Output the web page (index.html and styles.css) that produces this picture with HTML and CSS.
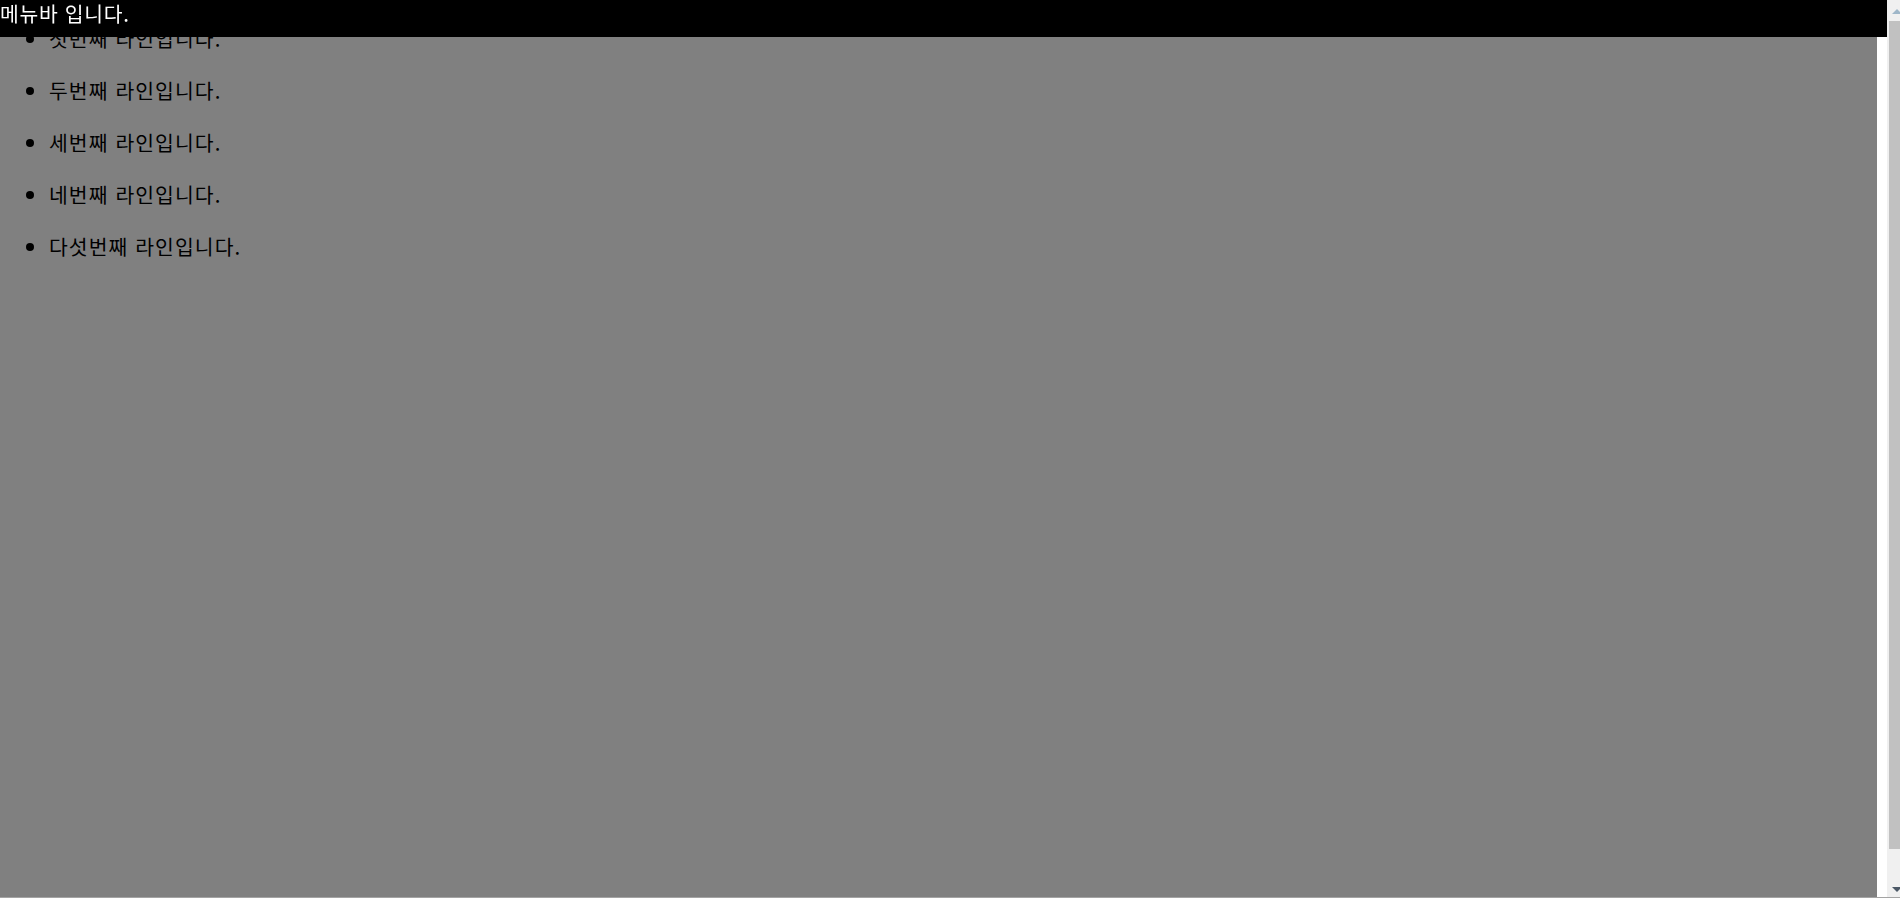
FILE: index.html
```html
<!DOCTYPE html>
<html lang="ko">
<head>
<meta charset="utf-8">
<title>메뉴바</title>
<link rel="stylesheet" href="styles.css">
</head>
<body>
<div class="frame">
  <div class="page">
    <div class="canvas">
      <ul class="lines">
        <li>첫번째 라인입니다.</li>
        <li>두번째 라인입니다.</li>
        <li>세번째 라인입니다.</li>
        <li>네번째 라인입니다.</li>
        <li>다섯번째 라인입니다.</li>
      </ul>
    </div>
    <div class="gutter"></div>
  </div>
  <div class="scrollbar">
    <svg class="arrow arrow-up" width="13" height="21" viewBox="0 0 13 21"><polygon points="5,14 10,9 15,14" fill="#9fb7c9"/></svg>
    <div class="thumb"></div>
    <svg class="arrow arrow-down" width="13" height="48" viewBox="0 0 13 48"><polygon points="5,38 15,38 10,43" fill="#4b5866"/></svg>
  </div>
</div>
<header class="menubar">메뉴바 입니다.</header>
</body>
</html>
```

FILE: styles.css
```css
html, body {
  margin: 0;
  padding: 0;
  overflow: hidden;
  background: #ffffff;
}

body {
  font-family: "Noto Sans CJK KR", "Noto Sans", sans-serif;
  font-size: 20.4px;
  width: 1900px;
  height: 898px;
}

.frame {
  display: flex;
  width: 1900px;
  height: 897px;
  border-bottom: 1px solid #a4a4a4;
}

.page {
  display: flex;
  flex: 0 0 1887px;
  background: #ffffff;
}

.canvas {
  flex: 0 0 1877px;
  background: #808080;
  overflow: hidden;
}

.gutter {
  flex: 1;
  background: #ffffff;
}

.lines {
  margin: 12px 0 0 0;
  padding: 0 0 0 49px;
  color: #000000;
  letter-spacing: 1.1px;
}

.lines li {
  line-height: 52px;
  height: 52px;
}

.scrollbar {
  flex: 0 0 13px;
  display: flex;
  flex-direction: column;
  background: #f0f0f0;
  overflow: hidden;
}

.arrow {
  display: block;
  flex: 0 0 auto;
}

.thumb {
  flex: 1;
  margin-left: 2px;
  background: #c1c1c1;
}

.menubar {
  position: fixed;
  top: 0;
  left: 0;
  width: 1887px;
  height: 37px;
  background: #000000;
  color: #ffffff;
  line-height: 27px;
  font-size: 20.4px;
  letter-spacing: 0.7px;
  white-space: nowrap;
}
```
